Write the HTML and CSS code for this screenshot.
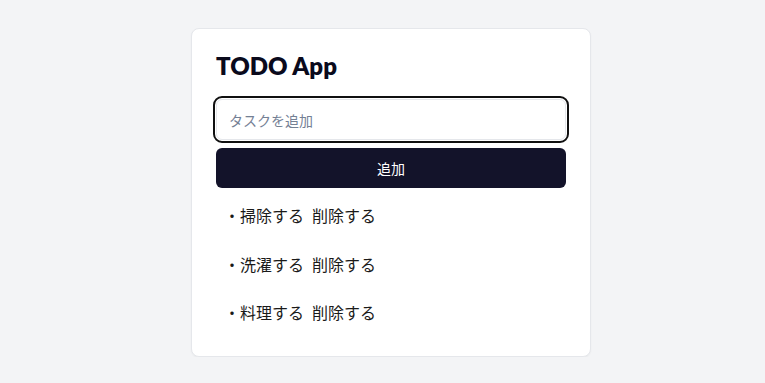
FILE: index.html
```html
<!DOCTYPE html>
<html lang="ja">
<head>
<meta charset="utf-8">
<link rel="stylesheet" href="styles.css">
</head>
<body>
<div class="page">
  <div class="card">
    <h1 class="title">TODO App</h1>
    <input class="task-input" type="text" placeholder="タスクを追加">
    <button class="add-btn">追加</button>
    <ul class="list">
      <li class="item"><span class="text">・掃除する</span><button class="del">削除する</button></li>
      <li class="item"><span class="text">・洗濯する</span><button class="del">削除する</button></li>
      <li class="item"><span class="text">・料理する</span><button class="del">削除する</button></li>
    </ul>
  </div>
</div>
</body>
</html>
```
FILE: styles.css
```css
html, body {
  margin: 0;
  padding: 0;
  background: #f3f4f6;
  font-family: Lato, "Noto Sans CJK JP", sans-serif;
}
.page {
  display: flex;
  justify-content: center;
  padding: 28px 0 0 17px;
}
.card {
  width: 400px;
  box-sizing: border-box;
  background: #ffffff;
  border: 1px solid #e5e7eb;
  border-radius: 8px;
  padding: 23px 24px 19px;
  box-shadow: 0 1px 2px rgba(0, 0, 0, 0.04);
}
.title {
  margin: 0 0 20px;
  font-size: 24px;
  line-height: 27px;
  font-weight: 800;
  color: #0a0a1c;
}
.task-input {
  display: block;
  width: 100%;
  box-sizing: border-box;
  height: 41px;
  margin: 0;
  padding: 8px 12px;
  border: 1px solid #e5e7eb;
  border-radius: 6px;
  font-family: "Noto Sans CJK JP", sans-serif;
  font-size: 14px;
  color: #111;
  outline: 2px solid #101010;
  outline-offset: 1px;
}
.task-input::placeholder {
  color: #748094;
}
.add-btn {
  display: block;
  width: 100%;
  height: 40px;
  margin: 8px 0 0;
  border: none;
  border-radius: 6px;
  background: #13132a;
  color: #ffffff;
  font-family: "Noto Sans CJK JP", sans-serif;
  font-size: 14px;
}
.list {
  list-style: none;
  margin: 3px 0 0;
  padding: 0;
}
.item {
  display: flex;
  align-items: center;
  height: 48.5px;
  padding-left: 8px;
  font-family: "Noto Sans CJK JP", sans-serif;
  font-size: 16px;
  color: #1a1a1a;
}
.del {
  margin: 0 0 0 8px;
  padding: 0;
  border: none;
  background: none;
  font-family: "Noto Sans CJK JP", sans-serif;
  font-size: 16px;
  color: #1a1a1a;
}
```
